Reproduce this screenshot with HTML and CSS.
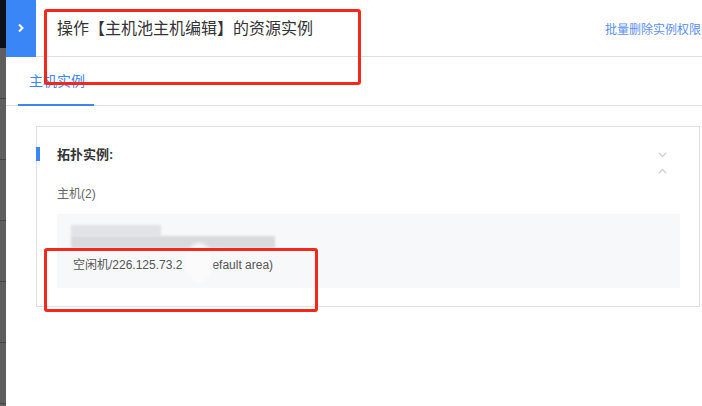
FILE: index.html
```html
<!DOCTYPE html>
<html lang="zh">
<head>
<meta charset="utf-8">
<link rel="stylesheet" href="styles.css">
</head>
<body>
<div class="page">
  <div class="strip">
    <div class="strip-top"></div>
    <div class="strip-rest"><i></i><i></i><i></i><i></i><i></i><i></i></div>
  </div>
  <div class="main">
    <div class="header">
      <div class="toggle">
        <svg width="8" height="10" viewBox="0 0 8 10"><path d="M2 1.5 L5.5 5 L2 8.5" fill="none" stroke="#fff" stroke-width="2"/></svg>
      </div>
      <div class="header-bar">
        <div class="title">操作【主机池主机编辑】的资源实例</div>
        <a class="link">批量删除实例权限</a>
      </div>
    </div>
    <div class="tabs">
      <div class="tab">主机实例</div>
    </div>
    <div class="content">
      <div class="card">
        <div class="card-head">
          <div class="card-title">拓扑实例:</div>
          <div class="arrows">
            <svg width="9" height="6" viewBox="0 0 9 6"><path d="M1 1 L4.5 4.5 L8 1" fill="none" stroke="#c8cbd2" stroke-width="1.2"/></svg>
            <svg width="9" height="6" viewBox="0 0 9 6"><path d="M1 5 L4.5 1.5 L8 5" fill="none" stroke="#c8cbd2" stroke-width="1.2"/></svg>
          </div>
        </div>
        <div class="sub">主机(2)</div>
        <div class="hosts">
          <div class="blurred">
            <span class="b1"></span>
            <span class="b2"></span>
          </div>
          <div class="host-line">空闲机/226.125.73.2<span class="gap"><span class="blob"></span></span>efault area)</div>
        </div>
      </div>
    </div>
  </div>
</div>
<div class="mark mark-1"></div>
<div class="mark mark-2"></div>
</body>
</html>
```
FILE: styles.css
```css
html, body {
  margin: 0;
  padding: 0;
  background: #fff;
  font-family: "Liberation Sans", "Noto Sans CJK SC", sans-serif;
  width: 702px;
  height: 406px;
  overflow: hidden;
}
.page {
  display: flex;
  height: 406px;
}
.strip {
  width: 6px;
  display: flex;
  flex-direction: column;
  flex: none;
}
.strip-top {
  height: 48px;
  background: #0c1119;
}
.strip-rest {
  flex: 1;
  background: #5e5e5e;
  display: flex;
  flex-direction: column;
  padding-top: 50px;
  gap: 60px;
}
.strip-rest i {
  display: block;
  height: 1px;
  background: #444;
}
.main {
  flex: 1;
  display: flex;
  flex-direction: column;
}
.header {
  display: flex;
  height: 57px;
}
.toggle {
  width: 30px;
  height: 57px;
  background: #3a86f7;
  display: flex;
  align-items: center;
  justify-content: center;
  padding-bottom: 2px;
  box-sizing: border-box;
}
.header-bar {
  flex: 1;
  display: flex;
  align-items: center;
  justify-content: space-between;
  border-bottom: 1px solid #dcdfe6;
  padding-left: 21px;
  padding-right: 1px;
  padding-bottom: 2px;
}
.title {
  font-size: 16px;
  color: #333;
}
.link {
  font-size: 12px;
  color: #5b8ef5;
  padding-top: 3px;
}
.tabs {
  display: flex;
  height: 48px;
  border-bottom: 1px solid #dcdfe6;
  padding-left: 12px;
}
.tab {
  width: 76px;
  box-sizing: border-box;
  text-align: center;
  font-size: 14px;
  color: #3a86f7;
  line-height: 48px;
  border-bottom: 2px solid #3a86f7;
  margin-bottom: -1px;
  padding-left: 2px;
}
.content {
  padding: 20px 2px 0 30px;
}
.card {
  border: 1px solid #dcdfe6;
  padding: 20px 19px 18px 20px;
  position: relative;
}
.card-head {
  display: flex;
  justify-content: space-between;
  height: 32px;
  position: relative;
}
.card-head::before {
  content: "";
  position: absolute;
  left: -21px;
  top: 0;
  width: 4px;
  height: 14px;
  background: #3a86f7;
}
.card-title {
  font-size: 13px;
  font-weight: bold;
  color: #333;
  line-height: 16px;
}
.arrows {
  display: flex;
  flex-direction: column;
  gap: 10px;
  padding-top: 5px;
  margin-right: 13px;
}
.arrows svg { display: block; }
.sub {
  font-size: 12px;
  color: #666;
  line-height: 16px;
  margin-top: 7px;
  margin-bottom: 12px;
}
.hosts {
  background: #f7f8fa;
  height: 74px;
  padding-left: 14px;
  box-sizing: border-box;
  position: relative;
}
.blurred {
  position: relative;
  height: 43px;
}
.b1 {
  position: absolute;
  left: 0;
  top: 11px;
  width: 90px;
  height: 11px;
  background: #e2e3e6;
  filter: blur(1.2px);
}
.b2 {
  position: absolute;
  left: 0;
  top: 22px;
  width: 204px;
  height: 12px;
  background: #d9dade;
  filter: blur(1.2px);
}
.host-line {
  font-size: 12px;
  color: #555;
  line-height: 16px;
  padding-left: 2px;
}
.gap {
  display: inline-block;
  width: 30px;
  height: 12px;
  position: relative;
}
.blob {
  position: absolute;
  left: 4px;
  top: -14px;
  width: 26px;
  height: 40px;
  border-radius: 50%;
  background: #fbfbfc;
  filter: blur(2px);
}
.mark {
  position: absolute;
  border: 3px solid #f4271a;
  border-radius: 3px;
  box-sizing: border-box;
}
.mark-1 {
  left: 44px;
  top: 9px;
  width: 317px;
  height: 76px;
}
.mark-2 {
  left: 44px;
  top: 248px;
  width: 274px;
  height: 64px;
}
```
